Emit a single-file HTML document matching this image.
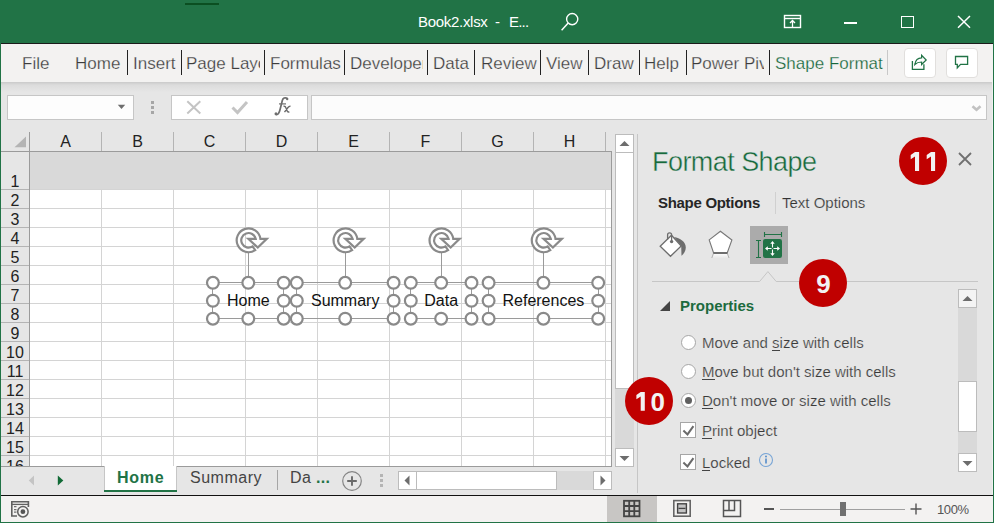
<!DOCTYPE html>
<html><head><meta charset="utf-8">
<style>
*{margin:0;padding:0;box-sizing:border-box}
html,body{width:994px;height:523px;overflow:hidden;background:#e6e6e6;font-family:"Liberation Sans",sans-serif;position:relative}
.a{position:absolute}
#title{left:0;top:0;width:994px;height:43px;background:#217346}
#tline{left:0;top:43px;width:994px;height:1px;background:#1b1b1b}
#ribbon{left:1px;top:44px;width:992px;height:38px;background:#f3f2f1}
.tab{position:absolute;top:54px;font-size:17px;line-height:20px;color:#3c3c3c;-webkit-text-stroke:0.25px #f3f2f1;white-space:nowrap}
.sep{position:absolute;top:50px;width:1px;height:25px;background:#222}
#fbar{left:1px;top:82px;width:992px;height:50px;background:linear-gradient(#cacaca,#dcdcdc 3px,#e6e6e6 10px)}
.box{position:absolute;background:#fff;border:1px solid #c6c6c6}
#lborder{left:0;top:43px;width:1px;height:480px;background:#217346}
#rborder{left:993px;top:43px;width:1px;height:480px;background:#217346}
#bborder{left:0;top:522px;width:994px;height:1px;background:#217346}
#cells{left:30px;top:152px;width:581px;height:314px;background-color:#fff;
 background-image:linear-gradient(90deg,#d4d4d4 1px,transparent 1px),linear-gradient(#d4d4d4 1px,transparent 1px);
 background-size:72px 19px;background-position:71px 0,0 37px}
#row1{left:30px;top:152px;width:581px;height:37px;background:#d9d9d9}
.ch{position:absolute;top:133px;width:71px;text-align:center;font-size:16px;line-height:18px;color:#222}
.chs{top:132px;width:1px;height:19px;background:#b4b4b4}
.rh{position:absolute;left:1px;width:28px;text-align:center;font-size:16px;line-height:18px;color:#222}
.rhl{left:1px;width:28px;height:1px;background:#b4b4b4}
#hdrline{left:1px;top:151px;width:610px;height:1px;background:#9b9b9b}
#rhdrline{left:29px;top:132px;width:1px;height:334px;background:#9b9b9b}
#gridR{left:611px;top:151px;width:1px;height:316px;background:#9b9b9b}
#gridB{left:1px;top:466px;width:611px;height:1px;background:#9b9b9b}
.sbtn{position:absolute;background:#fff;border:1px solid #bcbcbc}
.badge{position:absolute;width:48px;height:48px;border-radius:50%;background:#c00000;color:#fff;font-weight:bold;font-size:26px;line-height:48px;text-align:center;letter-spacing:-1px}
.pt{position:absolute;font-size:15px;line-height:18px;color:#3a3a3a;-webkit-text-stroke:0.2px #e6e6e6;white-space:nowrap}
.radio{position:absolute;width:15px;height:15px;border-radius:50%;background:#fff;border:1px solid #a6a6a6}
.cb{position:absolute;width:16px;height:16px;background:#fff;border:1px solid #a6a6a6}
u{text-decoration:none;display:inline-block;line-height:13.5px;border-bottom:1px solid #444}
</style></head><body>
<div id="title" class="a"></div>
<div class="a" style="left:185px;top:3px;width:34px;height:2px;background:#0b4f21"></div>
<div class="a" style="left:418px;top:12px;font-size:15px;line-height:20px;color:#fff;letter-spacing:-0.3px">Book2.xlsx</div><div class="a" style="left:495px;top:12px;font-size:15px;line-height:20px;color:#fff">-</div><div class="a" style="left:509px;top:12px;font-size:15px;line-height:20px;color:#fff;letter-spacing:-0.8px">E...</div>
<svg class="a" style="left:558px;top:10px" width="24" height="24"><circle cx="14.2" cy="9.1" r="5.6" fill="none" stroke="#fff" stroke-width="1.4"/><line x1="10.2" y1="13.1" x2="3.6" y2="20.3" stroke="#fff" stroke-width="1.5"/></svg>
<svg class="a" style="left:780px;top:12px" width="24" height="20"><rect x="4.5" y="3.5" width="16" height="12" fill="none" stroke="#fff" stroke-width="1.4"/><line x1="4.5" y1="6.5" x2="20.5" y2="6.5" stroke="#fff" stroke-width="1.4"/><path d="M12.5,15 V9 M10,11 L12.5,8.5 L15,11" fill="none" stroke="#fff" stroke-width="1.3"/></svg>
<div class="a" style="left:844px;top:22px;width:13px;height:1.6px;background:#fff"></div>
<div class="a" style="left:901px;top:16px;width:12.5px;height:12px;border:1.5px solid #fff"></div>
<svg class="a" style="left:955px;top:13px" width="17" height="17"><path d="M3,3 L15,14.8 M15,3 L3,14.8" stroke="#fff" stroke-width="1.5"/></svg>

<div id="ribbon" class="a"></div>
<div id="tline" class="a"></div>
<div class="tab" style="left:22px">File</div>
<div class="tab" style="left:75px">Home</div>
<div class="sep" style="left:127px"></div>
<div class="tab" style="left:133px">Insert</div>
<div class="sep" style="left:181px"></div>
<div class="tab" style="left:186px;width:74px;overflow:hidden">Page Layout</div>
<div class="sep" style="left:264px"></div>
<div class="tab" style="left:270px">Formulas</div>
<div class="sep" style="left:344px"></div>
<div class="tab" style="left:350px;width:73px;overflow:hidden">Developer</div>
<div class="sep" style="left:427px"></div>
<div class="tab" style="left:433px">Data</div>
<div class="sep" style="left:474px"></div>
<div class="tab" style="left:481px">Review</div>
<div class="sep" style="left:540px"></div>
<div class="tab" style="left:546px">View</div>
<div class="sep" style="left:588px"></div>
<div class="tab" style="left:594px">Draw</div>
<div class="sep" style="left:639px"></div>
<div class="tab" style="left:644px">Help</div>
<div class="sep" style="left:686px"></div>
<div class="tab" style="left:691px;width:73px;overflow:hidden">Power Pivot</div>
<div class="sep" style="left:769px"></div>
<div class="tab" style="left:775px;color:#16663a">Shape Format</div>
<div class="sep" style="left:887px;background:#c8c8c8"></div>
<div class="a" style="left:904px;top:48px;width:32px;height:30px;background:#fff;border:1px solid #e1dfdd;border-radius:4px"></div>
<div class="a" style="left:946px;top:48px;width:32px;height:30px;background:#fff;border:1px solid #e1dfdd;border-radius:4px"></div>
<svg class="a" style="left:0;top:0" width="994" height="100"><path d="M912.4,61 V69.4 H923.9 V64.2" fill="none" stroke="#217346" stroke-width="1.3"/><path d="M914.8,64.5 C915.5,59.8 918,57.8 921.6,57.8 V55.3 L926.2,60 L921.6,64.5 V62 C918.5,62 916.5,62.8 914.8,64.5 Z" fill="none" stroke="#217346" stroke-width="1.2" stroke-linejoin="miter"/><path d="M955.5,56.5 H967.6 V64.4 H960.6 L957.3,67.8 V64.4 H955.5 Z" fill="none" stroke="#217346" stroke-width="1.3"/></svg>
<div id="fbar" class="a"></div>
<div class="box" style="left:7px;top:95px;width:127px;height:25px;background:#fdfdfd"></div>
<svg class="a" style="left:115px;top:103px" width="12" height="8"><path d="M2.8,1.8 H10.2 L6.5,6 Z" fill="#6d6d6d"/></svg>
<div class="a" style="left:151px;top:101px;width:3px;height:3px;background:#a6a6a6"></div>
<div class="a" style="left:151px;top:106px;width:3px;height:3px;background:#a6a6a6"></div>
<div class="a" style="left:151px;top:111px;width:3px;height:3px;background:#a6a6a6"></div>
<div class="box" style="left:171px;top:95px;width:137px;height:25px"></div>
<svg class="a" style="left:185px;top:99px" width="18" height="18"><path d="M2.3,2.3 L15.3,14.5 M15.3,2.3 L2.3,14.5" stroke="#c4c4c4" stroke-width="2"/></svg>
<svg class="a" style="left:229px;top:99px" width="20" height="18"><path d="M3.5,8.5 L8.5,13.5 L18,3" fill="none" stroke="#c4c4c4" stroke-width="3"/></svg>
<svg class="a" style="left:268px;top:95px" width="30" height="25"><path d="M7.5,19.3 C9.8,20.3 11.2,18.5 12.2,14 L14.3,5.5 C15,3 16.8,2.3 19.3,3.2" fill="none" stroke="#6d6d6d" stroke-width="1.7"/><circle cx="8" cy="18.8" r="1.5" fill="#6d6d6d"/><circle cx="19.2" cy="4" r="1.2" fill="#6d6d6d"/><path d="M11,8.9 H18" stroke="#6d6d6d" stroke-width="1.2"/><path d="M15.5,11.3 C16.8,11 17.6,11.6 18,13 L19.2,16 C19.6,17 20.3,17.3 21.3,16.6 M22.5,11.3 C21.5,11 20.8,11.5 20,12.5 L16.5,17.2" fill="none" stroke="#6d6d6d" stroke-width="1.4"/></svg>
<div class="box" style="left:311px;top:95px;width:676px;height:25px;background:#fcfcfc"></div>
<svg class="a" style="left:969px;top:103px" width="14" height="10"><path d="M3.5,3.2 L7.5,6.8 L11.5,3.2" fill="none" stroke="#c2c2c2" stroke-width="2.6"/></svg>

<div id="cells" class="a"></div>
<div id="row1" class="a"></div>
<div id="hdrline" class="a"></div>
<div id="rhdrline" class="a"></div>
<svg class="a" style="left:5px;top:136px" width="22" height="14"><path d="M21,0.5 V11.3 H9.5 Z" fill="#b4b4b4"/></svg>
<div class="ch" style="left:30px">A</div>
<div class="ch" style="left:102px">B</div>
<div class="ch" style="left:174px">C</div>
<div class="ch" style="left:246px">D</div>
<div class="ch" style="left:318px">E</div>
<div class="ch" style="left:390px">F</div>
<div class="ch" style="left:462px">G</div>
<div class="ch" style="left:534px">H</div>
<div class="a chs" style="left:101px"></div>
<div class="a chs" style="left:173px"></div>
<div class="a chs" style="left:245px"></div>
<div class="a chs" style="left:317px"></div>
<div class="a chs" style="left:389px"></div>
<div class="a chs" style="left:461px"></div>
<div class="a chs" style="left:533px"></div>
<div class="a chs" style="left:605px"></div>
<div class="rh" style="top:173px">1</div>
<div class="a rhl" style="top:189px"></div>
<div class="rh" style="top:192px">2</div>
<div class="a rhl" style="top:208px"></div>
<div class="rh" style="top:211px">3</div>
<div class="a rhl" style="top:227px"></div>
<div class="rh" style="top:230px">4</div>
<div class="a rhl" style="top:246px"></div>
<div class="rh" style="top:249px">5</div>
<div class="a rhl" style="top:265px"></div>
<div class="rh" style="top:268px">6</div>
<div class="a rhl" style="top:284px"></div>
<div class="rh" style="top:287px">7</div>
<div class="a rhl" style="top:303px"></div>
<div class="rh" style="top:306px">8</div>
<div class="a rhl" style="top:322px"></div>
<div class="rh" style="top:325px">9</div>
<div class="a rhl" style="top:341px"></div>
<div class="rh" style="top:344px">10</div>
<div class="a rhl" style="top:360px"></div>
<div class="rh" style="top:363px">11</div>
<div class="a rhl" style="top:379px"></div>
<div class="rh" style="top:382px">12</div>
<div class="a rhl" style="top:398px"></div>
<div class="rh" style="top:401px">13</div>
<div class="a rhl" style="top:417px"></div>
<div class="rh" style="top:420px">14</div>
<div class="a rhl" style="top:436px"></div>
<div class="rh" style="top:439px">15</div>
<div class="a rhl" style="top:455px"></div>
<div class="rh" style="top:458px">16</div>
<div id="gridR" class="a"></div>
<div id="gridB" class="a"></div>

<svg class="a" style="left:0;top:0" width="994" height="523" font-family="Liberation Sans">
<rect x="212.5" y="282.5" width="71.0" height="36" fill="none" stroke="#9a9a9a" stroke-width="1"/>
<line x1="248.5" y1="252.5" x2="248.5" y2="277" stroke="#9a9a9a" stroke-width="1"/>
<text x="248.3" y="306" text-anchor="middle" font-size="16" fill="#111">Home</text>
<rect x="296.5" y="282.5" width="97.0" height="36" fill="none" stroke="#9a9a9a" stroke-width="1"/>
<line x1="345.5" y1="252.5" x2="345.5" y2="277" stroke="#9a9a9a" stroke-width="1"/>
<text x="345.20000000000005" y="306" text-anchor="middle" font-size="16" fill="#111">Summary</text>
<rect x="410.5" y="282.5" width="61.0" height="36" fill="none" stroke="#9a9a9a" stroke-width="1"/>
<line x1="441.5" y1="252.5" x2="441.5" y2="277" stroke="#9a9a9a" stroke-width="1"/>
<text x="441.15" y="306" text-anchor="middle" font-size="16" fill="#111">Data</text>
<rect x="488.5" y="282.5" width="110.0" height="36" fill="none" stroke="#9a9a9a" stroke-width="1"/>
<line x1="543.5" y1="252.5" x2="543.5" y2="277" stroke="#9a9a9a" stroke-width="1"/>
<text x="543.4000000000001" y="306" text-anchor="middle" font-size="16" fill="#111">References</text>
<circle cx="212.9" cy="282.8" r="5.9" fill="#fff" stroke="#8a8a8a" stroke-width="2.2"/>
<circle cx="248.3" cy="282.8" r="5.9" fill="#fff" stroke="#8a8a8a" stroke-width="2.2"/>
<circle cx="283.7" cy="282.8" r="5.9" fill="#fff" stroke="#8a8a8a" stroke-width="2.2"/>
<circle cx="212.9" cy="300.75" r="5.9" fill="#fff" stroke="#8a8a8a" stroke-width="2.2"/>
<circle cx="283.7" cy="300.75" r="5.9" fill="#fff" stroke="#8a8a8a" stroke-width="2.2"/>
<circle cx="212.9" cy="318.7" r="5.9" fill="#fff" stroke="#8a8a8a" stroke-width="2.2"/>
<circle cx="248.3" cy="318.7" r="5.9" fill="#fff" stroke="#8a8a8a" stroke-width="2.2"/>
<circle cx="283.7" cy="318.7" r="5.9" fill="#fff" stroke="#8a8a8a" stroke-width="2.2"/>
<g transform="translate(248.60000000000002,240.3)"><path d="M-0.2,-1.5 L7.1,-1.5 A7.3,7.3 0 1 0 4.0,6.1 L6.6,9.9 A11.9,11.9 0 1 1 11.8,-1.5 L18.2,-1.5 L9.2,7.3 Z" fill="#fff" stroke="#8a8a8a" stroke-width="2.2" stroke-linejoin="miter"/></g>
<circle cx="296.8" cy="282.8" r="5.9" fill="#fff" stroke="#8a8a8a" stroke-width="2.2"/>
<circle cx="345.20000000000005" cy="282.8" r="5.9" fill="#fff" stroke="#8a8a8a" stroke-width="2.2"/>
<circle cx="393.6" cy="282.8" r="5.9" fill="#fff" stroke="#8a8a8a" stroke-width="2.2"/>
<circle cx="296.8" cy="300.75" r="5.9" fill="#fff" stroke="#8a8a8a" stroke-width="2.2"/>
<circle cx="393.6" cy="300.75" r="5.9" fill="#fff" stroke="#8a8a8a" stroke-width="2.2"/>
<circle cx="296.8" cy="318.7" r="5.9" fill="#fff" stroke="#8a8a8a" stroke-width="2.2"/>
<circle cx="345.20000000000005" cy="318.7" r="5.9" fill="#fff" stroke="#8a8a8a" stroke-width="2.2"/>
<circle cx="393.6" cy="318.7" r="5.9" fill="#fff" stroke="#8a8a8a" stroke-width="2.2"/>
<g transform="translate(345.50000000000006,240.3)"><path d="M-0.2,-1.5 L7.1,-1.5 A7.3,7.3 0 1 0 4.0,6.1 L6.6,9.9 A11.9,11.9 0 1 1 11.8,-1.5 L18.2,-1.5 L9.2,7.3 Z" fill="#fff" stroke="#8a8a8a" stroke-width="2.2" stroke-linejoin="miter"/></g>
<circle cx="410.8" cy="282.8" r="5.9" fill="#fff" stroke="#8a8a8a" stroke-width="2.2"/>
<circle cx="441.15" cy="282.8" r="5.9" fill="#fff" stroke="#8a8a8a" stroke-width="2.2"/>
<circle cx="471.5" cy="282.8" r="5.9" fill="#fff" stroke="#8a8a8a" stroke-width="2.2"/>
<circle cx="410.8" cy="300.75" r="5.9" fill="#fff" stroke="#8a8a8a" stroke-width="2.2"/>
<circle cx="471.5" cy="300.75" r="5.9" fill="#fff" stroke="#8a8a8a" stroke-width="2.2"/>
<circle cx="410.8" cy="318.7" r="5.9" fill="#fff" stroke="#8a8a8a" stroke-width="2.2"/>
<circle cx="441.15" cy="318.7" r="5.9" fill="#fff" stroke="#8a8a8a" stroke-width="2.2"/>
<circle cx="471.5" cy="318.7" r="5.9" fill="#fff" stroke="#8a8a8a" stroke-width="2.2"/>
<g transform="translate(441.45,240.3)"><path d="M-0.2,-1.5 L7.1,-1.5 A7.3,7.3 0 1 0 4.0,6.1 L6.6,9.9 A11.9,11.9 0 1 1 11.8,-1.5 L18.2,-1.5 L9.2,7.3 Z" fill="#fff" stroke="#8a8a8a" stroke-width="2.2" stroke-linejoin="miter"/></g>
<circle cx="488.6" cy="282.8" r="5.9" fill="#fff" stroke="#8a8a8a" stroke-width="2.2"/>
<circle cx="543.4000000000001" cy="282.8" r="5.9" fill="#fff" stroke="#8a8a8a" stroke-width="2.2"/>
<circle cx="598.2" cy="282.8" r="5.9" fill="#fff" stroke="#8a8a8a" stroke-width="2.2"/>
<circle cx="488.6" cy="300.75" r="5.9" fill="#fff" stroke="#8a8a8a" stroke-width="2.2"/>
<circle cx="598.2" cy="300.75" r="5.9" fill="#fff" stroke="#8a8a8a" stroke-width="2.2"/>
<circle cx="488.6" cy="318.7" r="5.9" fill="#fff" stroke="#8a8a8a" stroke-width="2.2"/>
<circle cx="543.4000000000001" cy="318.7" r="5.9" fill="#fff" stroke="#8a8a8a" stroke-width="2.2"/>
<circle cx="598.2" cy="318.7" r="5.9" fill="#fff" stroke="#8a8a8a" stroke-width="2.2"/>
<g transform="translate(543.7,240.3)"><path d="M-0.2,-1.5 L7.1,-1.5 A7.3,7.3 0 1 0 4.0,6.1 L6.6,9.9 A11.9,11.9 0 1 1 11.8,-1.5 L18.2,-1.5 L9.2,7.3 Z" fill="#fff" stroke="#8a8a8a" stroke-width="2.2" stroke-linejoin="miter"/></g>
</svg>

<!-- vertical scrollbar -->
<div class="a" style="left:612px;top:132px;width:25px;height:335px;background:#e6e6e6"></div>
<div class="a" style="left:615px;top:134px;width:19px;height:332px;background:#d9d9d9"></div>
<div class="sbtn" style="left:615px;top:134px;width:19px;height:19px"></div>
<svg class="a" style="left:615px;top:134px" width="19" height="19"><path d="M4.5,12 H14.5 L9.5,7 Z" fill="#6d6d6d"/></svg>
<div class="sbtn" style="left:615px;top:152px;width:19px;height:237px"></div>
<div class="sbtn" style="left:615px;top:448px;width:19px;height:19px"></div>
<svg class="a" style="left:615px;top:448px" width="19" height="19"><path d="M4.5,8 H14.5 L9.5,13 Z" fill="#6d6d6d"/></svg>
<div class="a" style="left:637px;top:134px;width:1px;height:359px;background:#c6c6c6"></div>

<!-- sheet tabs -->
<div class="a" style="left:1px;top:467px;width:636px;height:27px;background:#e6e6e6"></div>
<svg class="a" style="left:24px;top:472px" width="14" height="16"><path d="M10,3.6 V13.4 L4.8,8.5 Z" fill="#c4c4c4"/></svg>
<svg class="a" style="left:54px;top:472px" width="14" height="16"><path d="M3.8,3.6 V13.4 L9.3,8.5 Z" fill="#116a36"/></svg>
<div class="a" style="left:104px;top:466px;width:73px;height:26px;background:#fff;border-left:1px solid #c6c6c6;border-right:1px solid #c6c6c6"></div>
<div class="a" style="left:104px;top:490px;width:73px;height:2px;background:#217346"></div>
<div class="a" style="left:117px;top:468px;font-size:16px;line-height:20px;font-weight:bold;color:#217346;letter-spacing:0.7px">Home</div>
<div class="a" style="left:190px;top:468px;font-size:16px;line-height:20px;color:#444;letter-spacing:0.5px">Summary</div>
<div class="a" style="left:277px;top:470px;width:1px;height:20px;background:#a6a6a6"></div>
<div class="a" style="left:290px;top:468px;font-size:16px;line-height:20px;color:#444;letter-spacing:0.5px">Da</div>
<div class="a" style="left:316px;top:468px;font-size:16px;line-height:20px;color:#217346;font-weight:bold;letter-spacing:0.3px">...</div>
<svg class="a" style="left:340px;top:469px" width="24" height="24"><circle cx="12" cy="12" r="9.3" fill="none" stroke="#858585" stroke-width="1.2"/><path d="M12,7.2 V16.8 M7.2,12 H16.8" stroke="#6a6a6a" stroke-width="1.9"/></svg>
<div class="a" style="left:380px;top:474px;width:3px;height:3px;background:#b4b4b4"></div>
<div class="a" style="left:380px;top:479px;width:3px;height:3px;background:#b4b4b4"></div>
<div class="a" style="left:380px;top:484px;width:3px;height:3px;background:#b4b4b4"></div>
<div class="a" style="left:398px;top:471px;width:213px;height:19px;background:#d9d9d9"></div>
<div class="sbtn" style="left:398px;top:471px;width:19px;height:19px"></div>
<svg class="a" style="left:398px;top:471px" width="19" height="19"><path d="M11.5,4.5 V14.5 L6.5,9.5 Z" fill="#6d6d6d"/></svg>
<div class="sbtn" style="left:416px;top:471px;width:141px;height:19px"></div>
<div class="sbtn" style="left:593px;top:471px;width:19px;height:19px"></div>
<svg class="a" style="left:593px;top:471px" width="19" height="19"><path d="M7.5,4.5 V14.5 L12.5,9.5 Z" fill="#6d6d6d"/></svg>

<!-- format shape pane -->
<div class="a" style="left:652px;top:146px;font-size:27px;line-height:32px;color:#176a3c;white-space:nowrap;letter-spacing:-0.55px;-webkit-text-stroke:0.4px #e6e6e6">Format Shape</div>
<svg class="a" style="left:0;top:0" width="994" height="523"><circle cx="923" cy="161" r="24" fill="#c00000"/><path d="M915,152 H919.1 V171 H915 V156.6 L910.7,159.2 V155 Z M931,152 H935.1 V171 H931 V156.6 L926.7,159.2 V155 Z" fill="#f2f2f2"/></svg>
<svg class="a" style="left:956px;top:150px" width="18" height="18"><path d="M3,3 L15,15 M15,3 L3,15" stroke="#707070" stroke-width="1.8"/></svg>
<div class="pt" style="left:658px;top:194px;font-weight:bold;color:#262626;letter-spacing:-0.3px;-webkit-text-stroke:0">Shape Options</div>
<div class="a" style="left:775px;top:192px;width:1px;height:22px;background:#d0d0d0"></div>
<div class="pt" style="left:782px;top:194px;color:#333">Text Options</div>
<!-- icons -->
<svg class="a" style="left:655px;top:226px" width="36" height="36"><path d="M19,11 C25,12 30.8,15.5 30.8,21.5 C30.8,25 28.8,27.8 26.5,29.8 L26.2,20 Z" fill="#6d6d6d"/><path d="M5.2,20.3 L16.5,9.3 L26.2,20 L15.5,30.3 Z" fill="#fff" stroke="#6d6d6d" stroke-width="1.3" stroke-linejoin="miter"/><path d="M12.6,13.5 V8.8 A2,2 0 0 1 16.6,8.8 V15.5" fill="none" stroke="#6d6d6d" stroke-width="1.3"/><circle cx="16.6" cy="15.6" r="1.7" fill="#6d6d6d"/></svg>
<svg class="a" style="left:705px;top:228px" width="32" height="34"><defs><linearGradient id="lg" x1="0" y1="0" x2="0" y2="1"><stop offset="0" stop-color="#fff"/><stop offset="1" stop-color="#e6e6e6"/></linearGradient></defs><path d="M8.6,25 L6.5,30.5 H24.3 L22.2,25 Z" fill="url(#lg)"/><path d="M8.6,25 L6.8,30 M22.2,25 L24,30" stroke="#b0b0b0" stroke-width="1"/><path d="M15.4,3.2 L26.9,12 L22.2,25 H8.6 L4.2,11.9 Z" fill="#fff" stroke="#777" stroke-width="1.1"/><line x1="8.6" y1="25" x2="22.2" y2="25" stroke="#666" stroke-width="1.8"/></svg>
<div class="a" style="left:750px;top:226px;width:38px;height:38px;background:#ababab"></div>
<svg class="a" style="left:750px;top:226px" width="38" height="38"><path d="M14.5,8.5 H31.5 M14.5,6 V11 M31.5,6 V11 M8.5,14.5 V31.5 M6,14.5 H11 M6,31.5 H11" stroke="#217346" stroke-width="1.1" fill="none"/><rect x="13" y="13" width="19" height="19" rx="2.2" fill="#217346"/><path d="M22.5,17 V21.5 M22.5,23.5 V28 M16.5,22.5 H21.5 M23.5,22.5 H28.5" stroke="#fff" stroke-width="1.1"/><path d="M22.5,15 L20.3,17.8 H24.7 Z M22.5,30 L20.3,27.2 H24.7 Z M15,22.5 L17.8,20.3 V24.7 Z M30,22.5 L27.2,20.3 V24.7 Z" fill="#fff"/></svg>
<svg class="a" style="left:650px;top:268px" width="330" height="16"><path d="M2,13.5 H109.6 L117.9,3.6 L126.2,13.5 H328" fill="none" stroke="#c6c6c6" stroke-width="1"/></svg>
<svg class="a" style="left:0;top:0" width="994" height="523"><circle cx="823" cy="283" r="24" fill="#c00000"/><text x="823.5" y="292.8" text-anchor="middle" font-family="Liberation Sans" font-weight="bold" font-size="26" fill="#f2f2f2">9</text></svg>
<svg class="a" style="left:658px;top:299px" width="14" height="14"><path d="M2,12 H12 V2 Z" fill="#444"/></svg>
<div class="pt" style="left:680px;top:297px;font-weight:bold;color:#1c6b3e;-webkit-text-stroke:0">Properties</div>
<div class="radio" style="left:681px;top:335px"></div>
<div class="pt" style="left:702px;top:334px">Move and <u>s</u>ize with cells</div>
<div class="radio" style="left:681px;top:364px"></div>
<div class="pt" style="left:702px;top:363px"><u>M</u>ove but don't size with cells</div>
<div class="radio" style="left:681px;top:393px"></div>
<div class="a" style="left:685px;top:397px;width:7px;height:7px;border-radius:50%;background:#606060"></div>
<div class="pt" style="left:702px;top:392px"><u>D</u>on't move or size with cells</div>
<div class="cb" style="left:680px;top:422px"></div>
<svg class="a" style="left:680px;top:422px" width="16" height="16"><path d="M3.4,8.5 L7.5,12.4 L13.4,4.2" fill="none" stroke="#6a6a6a" stroke-width="2"/></svg>
<div class="pt" style="left:702px;top:422px"><u>P</u>rint object</div>
<div class="cb" style="left:680px;top:454px"></div>
<svg class="a" style="left:680px;top:454px" width="16" height="16"><path d="M3.4,8.5 L7.5,12.4 L13.4,4.2" fill="none" stroke="#6a6a6a" stroke-width="2"/></svg>
<div class="pt" style="left:702px;top:454px"><u>L</u>ocked</div>
<svg class="a" style="left:758px;top:452px" width="16" height="16"><circle cx="8" cy="8" r="6.5" fill="none" stroke="#7aa6d6" stroke-width="1.1"/><path d="M8,6.5 V11.5" stroke="#4a86c8" stroke-width="1.5"/><circle cx="8" cy="4.5" r="0.9" fill="#4a86c8"/></svg>
<svg class="a" style="left:0;top:0" width="994" height="523"><circle cx="649" cy="401" r="24" fill="#c00000"/><path d="M640.7,392 H644.8000000000001 V410.8 H640.7 V396.6 L636.4000000000001,399.2 V395 Z" fill="#f2f2f2"/><text x="657.7" y="410.8" text-anchor="middle" font-family="Liberation Sans" font-weight="bold" font-size="26" fill="#f2f2f2">0</text></svg>
<!-- pane scrollbar -->
<div class="a" style="left:958px;top:289px;width:19px;height:183px;background:#d9d9d9"></div>
<div class="sbtn" style="left:958px;top:289px;width:19px;height:19px;background:#f4f4f4"></div>
<svg class="a" style="left:958px;top:289px" width="19" height="19"><path d="M4.5,12 H14.5 L9.5,7 Z" fill="#6d6d6d"/></svg>
<div class="sbtn" style="left:958px;top:381px;width:19px;height:51px"></div>
<div class="sbtn" style="left:958px;top:453px;width:19px;height:19px"></div>
<svg class="a" style="left:958px;top:453px" width="19" height="19"><path d="M4.5,8 H14.5 L9.5,13 Z" fill="#6d6d6d"/></svg>
<div class="a" style="left:992px;top:82px;width:1px;height:412px;background:#f0f0f0"></div>

<!-- status bar -->
<div class="a" style="left:0;top:495px;width:994px;height:1px;background:#111"></div>
<div class="a" style="left:1px;top:496px;width:992px;height:26px;background:#f3f2f1"></div>
<svg class="a" style="left:9px;top:499px" width="24" height="20"><path d="M8,17 H2.8 V2.8 H19.4 V8" fill="none" stroke="#606060" stroke-width="1.6"/><path d="M2.8,5.4 H19.4" stroke="#606060" stroke-width="1.3"/><path d="M5,7.6 H7.5 M5,10.6 H7.5 M5,13.2 H7.5" stroke="#707070" stroke-width="1.2"/><circle cx="13.9" cy="12.7" r="5.2" fill="#f3f2f1" stroke="#606060" stroke-width="1.5"/><circle cx="13.9" cy="12.7" r="2.4" fill="#555"/></svg>
<div class="a" style="left:607px;top:496px;width:50px;height:26px;background:#c8c6c4"></div>
<svg class="a" style="left:622px;top:499px" width="20" height="20"><rect x="2" y="1.8" width="15.5" height="15.5" fill="none" stroke="#444" stroke-width="1.8"/><path d="M7.2,1.8 V17.3 M12.3,1.8 V17.3 M2,7 H17.5 M2,12.1 H17.5" stroke="#444" stroke-width="1.8"/></svg>
<svg class="a" style="left:672px;top:499px" width="20" height="20"><rect x="1.8" y="1.6" width="16.4" height="15.6" fill="none" stroke="#666" stroke-width="1.6"/><rect x="5.6" y="4.8" width="8.8" height="9.2" fill="#c4c4c4" stroke="#444" stroke-width="1.4"/><path d="M6.5,9.4 H13.5" stroke="#444" stroke-width="1.3"/></svg>
<svg class="a" style="left:722px;top:499px" width="20" height="20"><path d="M1.5,1.5 H18.5 V17.5 H1.5 Z M1.5,11.5 H12.5 V1.5 M7,1.5 V11.5" fill="none" stroke="#555" stroke-width="1.5"/></svg>
<div class="a" style="left:764px;top:508px;width:10px;height:1.5px;background:#555"></div>
<div class="a" style="left:780px;top:509px;width:125px;height:1px;background:#a0a0a0"></div>
<div class="a" style="left:840px;top:502px;width:6px;height:14px;background:#707070"></div>
<svg class="a" style="left:909px;top:502px" width="14" height="14"><path d="M7,1.5 V12.5 M1.5,7 H12.5" stroke="#555" stroke-width="1.4"/></svg>
<div class="a" style="left:937px;top:502px;font-size:13px;line-height:16px;color:#555;letter-spacing:-0.4px">100%</div>

<div id="lborder" class="a"></div>
<div id="rborder" class="a"></div>
<div id="bborder" class="a"></div>
</body></html>
